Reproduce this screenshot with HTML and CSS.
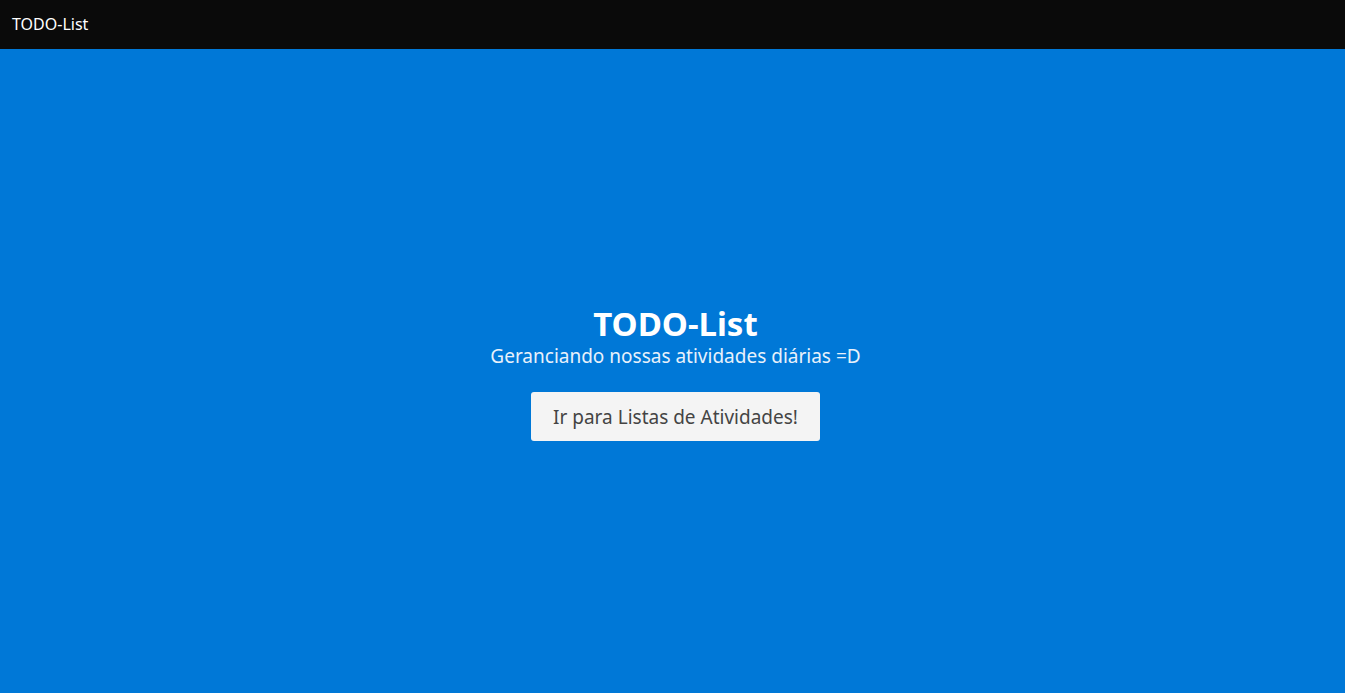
FILE: index.html
```html
<!DOCTYPE html>
<html lang="pt">
<head>
<meta charset="utf-8">
<title>TODO-List</title>
<link rel="stylesheet" href="styles.css">
</head>
<body>
<header class="topbar">
  <span class="brand">TODO-List</span>
</header>
<main class="hero">
  <h1 class="hero-title">TODO-List</h1>
  <p class="hero-subtitle">Geranciando nossas atividades diárias =D</p>
  <a class="hero-button" href="#">Ir para Listas de Atividades!</a>
</main>
</body>
</html>
```

FILE: styles.css
```css
* { box-sizing: border-box; }
html, body { margin: 0; padding: 0; height: 100%; }
body {
  font-family: "Noto Sans", "Open Sans", sans-serif;
  display: flex;
  flex-direction: column;
  background: #0078d7;
}
.topbar {
  height: 49px;
  background: #0a0a0a;
  display: flex;
  align-items: center;
  padding-left: 12px;
  padding-bottom: 2px;
  flex: none;
}
.brand {
  color: #ffffff;
  font-size: 16px;
}
.hero {
  flex: 1;
  display: flex;
  flex-direction: column;
  align-items: center;
  justify-content: center;
  color: #ffffff;
  padding-top: 6px;
  padding-left: 6px;
}
.hero-title {
  margin: 0 0 4px;
  font-size: 33px;
  font-weight: 700;
  line-height: 1;
}
.hero-subtitle {
  margin: 0;
  font-size: 19px;
  line-height: 1.3;
  color: #e8f1fb;
}
.hero-button {
  margin-top: 24px;
  display: inline-flex;
  align-items: center;
  justify-content: center;
  width: 289px;
  height: 49px;
  background: #f4f4f4;
  color: #444444;
  border-radius: 3px;
  font-size: 19px;
  text-decoration: none;
}
```
